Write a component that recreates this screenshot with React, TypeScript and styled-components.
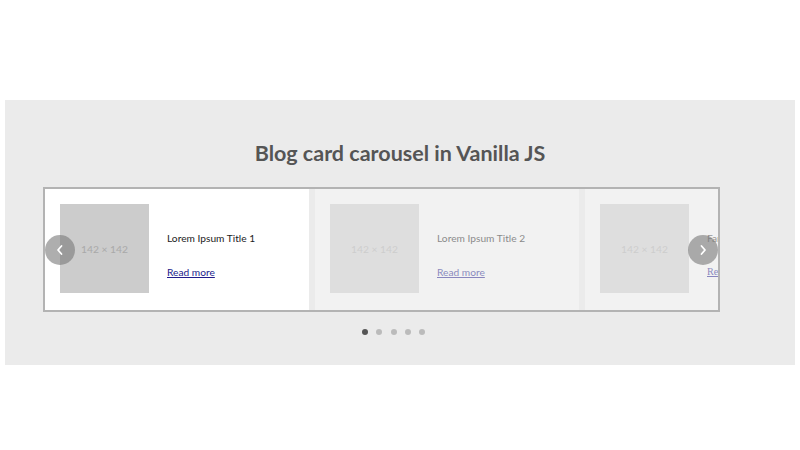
import styled, { createGlobalStyle } from "styled-components";

const GlobalStyle = createGlobalStyle`
  html, body {
    margin: 0;
    padding: 0;
    background: #ffffff;
    font-family: Lato, "Liberation Sans", sans-serif;
  }
`;

const Page = styled.div`
  padding: 100px 5px 0;
`;

const Section = styled.section`
  background-color: #ebebeb;
  padding: 40px 0 30px;
  display: flex;
  flex-direction: column;
`;

const Heading = styled.h2`
  margin: 0;
  font-size: 21.5px;
  line-height: 26px;
  font-weight: 700;
  color: #555555;
  text-align: center;
`;

const Frame = styled.div`
  position: relative;
  margin: 21px 0 0 38px;
  width: 677px;
  height: 125px;
  box-sizing: border-box;
  border: 2px solid #b3b3b3;
  overflow: hidden;
`;

const Track = styled.div`
  display: flex;
  gap: 6px;
  height: 100%;
`;

const Card = styled.article<{ $active?: boolean }>`
  flex: 0 0 264px;
  box-sizing: border-box;
  padding: 15px;
  display: flex;
  gap: 18px;
  background-color: ${(p) => (p.$active ? "#ffffff" : "#f2f2f2")};

  & > * {
    opacity: ${(p) => (p.$active ? 1 : 0.5)};
  }
`;

const Thumb = styled.div`
  flex: 0 0 89px;
  height: 89px;
  background-color: #cccccc;
  color: #a9a9a9;
  font-size: 10.3px;
  display: flex;
  align-items: center;
  justify-content: center;
`;

const Body = styled.div`
  display: flex;
  flex-direction: column;
  gap: 18px;
  padding-top: 26px;
  white-space: nowrap;
`;

const Title = styled.h3<{ $tone?: string }>`
  margin: 0;
  font-size: 10.2px;
  line-height: 16px;
  font-weight: 400;
  color: ${(p) => p.$tone ?? "#222222"};
`;

const ReadMore = styled.a<{ $serif?: boolean }>`
  font-size: 10.2px;
  line-height: 16px;
  color: #221c8c;
  text-decoration: underline;
  font-family: ${(p) =>
    p.$serif ? '"Liberation Serif", serif' : 'Lato, "Liberation Sans", sans-serif'};
`;

const Arrow = styled.button<{ $side: "left" | "right" }>`
  position: absolute;
  top: 46px;
  ${(p) => p.$side}: 0;
  width: 30px;
  height: 30px;
  padding: 0;
  border: none;
  border-radius: 50%;
  background-color: rgba(120, 120, 120, 0.6);
  display: flex;
  align-items: center;
  justify-content: center;
  cursor: pointer;
`;

const Dots = styled.div`
  display: flex;
  justify-content: center;
  gap: 8.3px;
  margin-top: 17px;
  padding-right: 13px;
`;

const Dot = styled.span<{ $active?: boolean }>`
  width: 6px;
  height: 6px;
  border-radius: 50%;
  background-color: ${(p) => (p.$active ? "#555555" : "#bbbbbb")};
`;

const cards = [
  { title: "Lorem Ipsum Title 1" },
  { title: "Lorem Ipsum Title 2" },
  { title: "Far far away", tone: "#3a3a3a", serif: true },
];

const Chevron = ({ dir }: { dir: "left" | "right" }) => (
  <svg width="10" height="12" viewBox="0 0 10 12" fill="none">
    <path
      d={dir === "left" ? "M6.5 2 L3 6 L6.5 10" : "M3.5 2 L7 6 L3.5 10"}
      stroke="#ffffff"
      strokeWidth="1.8"
      strokeLinecap="round"
      strokeLinejoin="round"
    />
  </svg>
);

export default function App() {
  return (
    <>
      <GlobalStyle />
      <Page>
        <Section>
          <Heading>Blog card carousel in Vanilla JS</Heading>
          <Frame>
            <Track>
              {cards.map((c, i) => (
                <Card key={c.title} $active={i === 0}>
                  <Thumb>142 × 142</Thumb>
                  <Body>
                    <Title $tone={c.tone}>{c.title}</Title>
                    <ReadMore href="#" $serif={c.serif}>
                      Read more
                    </ReadMore>
                  </Body>
                </Card>
              ))}
            </Track>
            <Arrow $side="left" aria-label="Previous">
              <Chevron dir="left" />
            </Arrow>
            <Arrow $side="right" aria-label="Next">
              <Chevron dir="right" />
            </Arrow>
          </Frame>
          <Dots>
            {[0, 1, 2, 3, 4].map((i) => (
              <Dot key={i} $active={i === 0} />
            ))}
          </Dots>
        </Section>
      </Page>
    </>
  );
}
